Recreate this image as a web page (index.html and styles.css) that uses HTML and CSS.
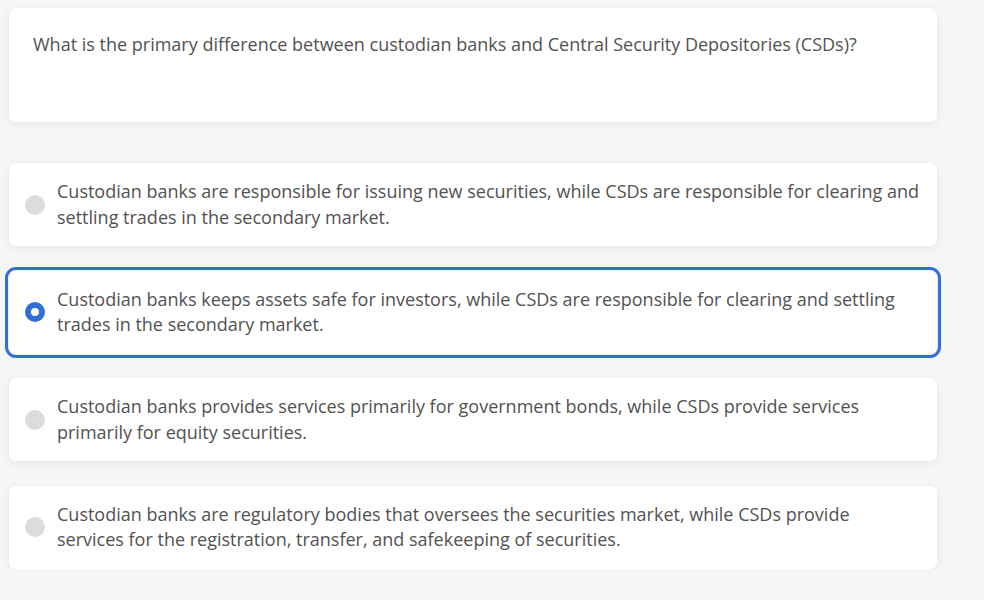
FILE: index.html
```html
<!DOCTYPE html>
<html lang="en">
<head>
<meta charset="utf-8">
<link rel="stylesheet" href="styles.css">
</head>
<body>
<main class="quiz">
  <section class="question-card">
    <p class="question">What is the primary difference between custodian banks and Central Security Depositories (CSDs)?</p>
  </section>
  <ul class="options">
    <li class="option">
      <span class="radio"></span>
      <span class="option-text">Custodian banks are responsible for issuing new securities, while CSDs are responsible for clearing and settling trades in the secondary market.</span>
    </li>
    <li class="option selected">
      <span class="radio"></span>
      <span class="option-text">Custodian banks keeps assets safe for investors, while CSDs are responsible for clearing and settling trades in the secondary market.</span>
    </li>
    <li class="option">
      <span class="radio"></span>
      <span class="option-text">Custodian banks provides services primarily for government bonds, while CSDs provide services primarily for equity securities.</span>
    </li>
    <li class="option">
      <span class="radio"></span>
      <span class="option-text">Custodian banks are regulatory bodies that oversees the securities market, while CSDs provide services for the registration, transfer, and safekeeping of securities.</span>
    </li>
  </ul>
</main>
</body>
</html>
```

FILE: styles.css
```css
html, body {
  margin: 0;
  padding: 0;
  background: #f5f6f8;
}
body {
  font-family: "Open Sans", "Noto Sans", sans-serif;
  color: #525252;
  font-size: 18px;
}
.quiz {
  width: 928px;
  margin-left: 9px;
  padding-top: 8px;
  display: flex;
  flex-direction: column;
  gap: 41px;
}
.question-card {
  background: #fff;
  border-radius: 7px;
  box-shadow: 0 2px 8px rgba(0, 0, 0, 0.07);
  min-height: 114px;
  box-sizing: border-box;
  padding: 24px 24px;
}
.question {
  margin: 0;
  line-height: 25px;
}
.options {
  list-style: none;
  margin: 0;
  padding: 0;
  display: flex;
  flex-direction: column;
  gap: 24.5px;
}
.option {
  background: #fff;
  border-radius: 7px;
  box-shadow: 0 2px 8px rgba(0, 0, 0, 0.07);
  display: flex;
  align-items: center;
  gap: 12px;
  padding: 16px 16px;
  line-height: 25.5px;
}
.option.selected {
  outline: 3px solid #3170d3;
  outline-offset: 1px;
}
.radio {
  flex: none;
  width: 20px;
  height: 20px;
  border-radius: 50%;
  background: #dcdcde;
  box-sizing: border-box;
}
.selected .radio {
  background: #fff;
  border: 6px solid #3170d3;
}
.option-text {
  flex: 1;
}
```
